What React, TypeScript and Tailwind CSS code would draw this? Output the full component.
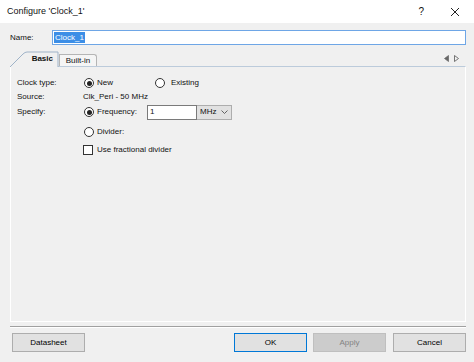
import React from "react";

function Radio({ checked }: { checked?: boolean }) {
  return (
    <span className="w-[10px] h-[10px] rounded-full border border-[#333333] bg-white flex items-center justify-center shrink-0">
      {checked && <span className="w-[5px] h-[5px] rounded-full bg-[#222222]" />}
    </span>
  );
}

function Btn({ label, variant }: { label: string; variant?: "default" | "disabled" }) {
  const cls =
    variant === "default"
      ? "border-[#0078d7] bg-[#e1e1e1] text-black"
      : variant === "disabled"
      ? "border-[#bfbfbf] bg-[#cccccc] text-[#838383]"
      : "border-[#adadad] bg-[#e1e1e1] text-black";
  return (
    <div className={`w-[73px] h-[19px] border flex items-center justify-center ${cls}`}>{label}</div>
  );
}

export default function App() {
  return (
    <div
      className="w-[474px] h-[362px] bg-[#f0f0f0] flex flex-col text-[8px] text-[#111111] overflow-hidden"
      style={{ fontFamily: '"Liberation Sans", Arial, sans-serif' }}
    >
      {/* Title bar */}
      <div className="h-[23px] bg-white flex items-center pl-[7px] pr-[14px] shrink-0">
        <span className="text-[9px] flex-1">Configure 'Clock_1'</span>
        <span className="text-[10px] mr-[26px]">?</span>
        <svg width="10" height="10" viewBox="0 0 10 10">
          <path d="M1 1 L9 9 M9 1 L1 9" stroke="#222" strokeWidth="1" />
        </svg>
      </div>

      {/* Name row */}
      <div className="flex items-center pl-[10px] pr-[8px] mt-[7px] h-[15px]">
        <span className="w-[42px]">Name:</span>
        <div className="flex-1 h-[15px] border border-[#6ea6e6] bg-white flex items-center px-px">
          <span className="bg-[#3c8ee6] text-white h-[11px] leading-[11px] px-[1px]">Clock_1</span>
        </div>
      </div>

      {/* Tabs header */}
      <div className="flex items-end mt-[6px] h-[15px] pl-[10px] pr-[15px]">
        <div className="relative w-[49px] h-[15px] flex items-center justify-end pr-[6px] z-10">
          <svg className="absolute inset-0" width="49" height="16" viewBox="0 0 49 16">
            <path
              d="M0 16 L13 3 Q15 1 17 1 L48 1 L48 16"
              fill="#f0f0f0"
              stroke="#9fb3c8"
              strokeWidth="1"
            />
          </svg>
          <span className="relative font-bold">Basic</span>
        </div>
        <div className="h-[12px] w-[38px] border border-b-0 border-[#b5b5b5] rounded-tr-[3px] bg-[#f5f5f5] flex items-center justify-center">
          Built-in
        </div>
        <div className="flex-1" />
        <div className="flex items-center gap-[5px] h-[15px] pb-[1px]">
          <svg width="5" height="7" viewBox="0 0 5 7">
            <path d="M4.5 0.5 L0.5 3.5 L4.5 6.5 Z" fill="#666" stroke="#666" strokeWidth="0.7" />
          </svg>
          <svg width="5" height="7" viewBox="0 0 5 7">
            <path d="M0.5 0.5 L4.5 3.5 L0.5 6.5 Z" fill="none" stroke="#555" strokeWidth="0.8" />
          </svg>
        </div>
      </div>

      {/* Panel */}
      <div className="mx-[10px] mr-[8px] h-[256px] border-t border-t-[#bccbdb] border-x border-b border-x-white border-b-white pt-[9px] pl-[6px] flex flex-col">
        <div className="flex items-center h-[14px]">
          <span className="w-[67px]">Clock type:</span>
          <div className="flex items-center w-[71px]">
            <Radio checked />
            <span className="ml-[3px]">New</span>
          </div>
          <div className="flex items-center">
            <Radio />
            <span className="ml-[6px]">Existing</span>
          </div>
        </div>
        <div className="flex items-center h-[14px]">
          <span className="w-[66px]">Source:</span>
          <span>Clk_Peri - 50 MHz</span>
        </div>
        <div className="flex items-center h-[16px]">
          <span className="w-[67px]">Specify:</span>
          <Radio checked />
          <span className="ml-[3px] w-[50px]">Frequency:</span>
          <div className="w-[50px] h-[15px] bg-white border border-[#7a7a7a] flex items-center pl-[2px]">1</div>
          <div className="w-[35px] h-[15px] bg-[#e1e1e1] border border-[#adadad] border-l-0 flex items-center pl-[3px] gap-[5px]">
            <span>MHz</span>
            <svg width="7" height="4" viewBox="0 0 7 4">
              <path d="M0.5 0.5 L3.5 3.5 L6.5 0.5" fill="none" stroke="#555" strokeWidth="0.9" />
            </svg>
          </div>
        </div>
        <div className="flex items-center h-[14px] mt-[5px] pl-[67px]">
          <Radio />
          <span className="ml-[3px]">Divider:</span>
        </div>
        <div className="flex items-center h-[14px] mt-[4px] pl-[66px]">
          <span className="w-[10px] h-[10px] border border-[#333333] bg-white shrink-0" />
          <span className="ml-[4px]">Use fractional divider</span>
        </div>
      </div>

      {/* Separator */}
      <div className="ml-[10px] mr-[8px] mt-[4px] h-[2px] border-t border-t-[#a0a0a0] border-b border-b-white" />

      {/* Buttons */}
      <div className="flex items-center mt-[5px] pl-[12px] pr-[8px]">
        <Btn label="Datasheet" />
        <div className="flex-1" />
        <Btn label="OK" variant="default" />
        <div className="w-[6px]" />
        <Btn label="Apply" variant="disabled" />
        <div className="w-[7px]" />
        <Btn label="Cancel" />
      </div>
    </div>
  );
}
